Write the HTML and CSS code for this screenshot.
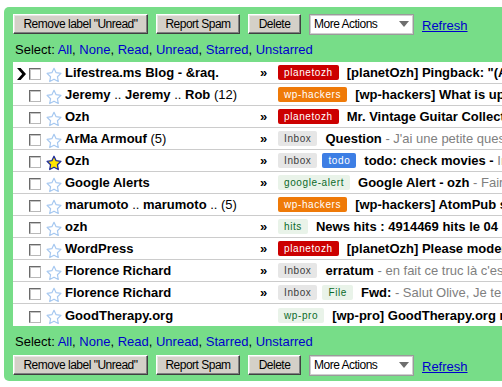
FILE: index.html
```html
<!DOCTYPE html>
<html>
<head>
<meta charset="utf-8">
<title>Inbox</title>
<link rel="stylesheet" href="styles.css">
</head>
<body>
<div class="page">
  <div class="panel">
    <div class="toolbar">
      <button class="btn btn-remove">Remove label "Unread"</button>
      <button class="btn btn-spam">Report Spam</button>
      <button class="btn btn-delete">Delete</button>
      <div class="select"><span>More Actions</span><span class="caret"></span></div>
      <a class="refresh" href="#">Refresh</a>
    </div>
    <div class="selectline">Select: <a href="#">All</a>, <a href="#">None</a>, <a href="#">Read</a>, <a href="#">Unread</a>, <a href="#">Starred</a>, <a href="#">Unstarred</a></div>

    <div class="list">
      <div class="row">
        <span class="c-arrow"><svg class="chev" width="9" height="12" viewBox="0 0 9 12"><polygon points="0,0 3.6,0 9,6 3.6,12 0,12 5.2,6" fill="#000"/></svg></span>
        <span class="c-check"><span class="check"></span></span>
        <span class="c-star"><svg class="star" width="16" height="16" viewBox="0 0 16 16"><polygon points="8,1.3 10.12,5.69 14.94,6.34 11.42,9.71 12.29,14.51 8,12.2 3.71,14.51 4.58,9.71 1.06,6.34 5.88,5.69"/></svg></span>
        <span class="c-from"><b>Lifestrea.ms Blog - &amp;raq.</b></span>
        <span class="c-more">»</span>
        <span class="c-subj"><span class="lbl lbl-red">planetozh</span><span class="subj"><b>[planetOzh] Pingback: "(Ab)using Google Reader"</b></span></span>
      </div>
      <div class="row">
        <span class="c-arrow"></span>
        <span class="c-check"><span class="check"></span></span>
        <span class="c-star"><svg class="star" width="16" height="16" viewBox="0 0 16 16"><polygon points="8,1.3 10.12,5.69 14.94,6.34 11.42,9.71 12.29,14.51 8,12.2 3.71,14.51 4.58,9.71 1.06,6.34 5.88,5.69"/></svg></span>
        <span class="c-from"><b>Jeremy</b> .. <b>Jeremy</b> .. <b>Rob</b> (12)</span>
        <span class="c-more"></span>
        <span class="c-subj"><span class="lbl lbl-orange">wp-hackers</span><span class="subj"><b>[wp-hackers] What is up with the plugins</b></span></span>
      </div>
      <div class="row">
        <span class="c-arrow"></span>
        <span class="c-check"><span class="check"></span></span>
        <span class="c-star"><svg class="star" width="16" height="16" viewBox="0 0 16 16"><polygon points="8,1.3 10.12,5.69 14.94,6.34 11.42,9.71 12.29,14.51 8,12.2 3.71,14.51 4.58,9.71 1.06,6.34 5.88,5.69"/></svg></span>
        <span class="c-from"><b>Ozh</b></span>
        <span class="c-more">»</span>
        <span class="c-subj"><span class="lbl lbl-red">planetozh</span><span class="subj"><b>Mr. Vintage Guitar Collection</b></span></span>
      </div>
      <div class="row">
        <span class="c-arrow"></span>
        <span class="c-check"><span class="check"></span></span>
        <span class="c-star"><svg class="star" width="16" height="16" viewBox="0 0 16 16"><polygon points="8,1.3 10.12,5.69 14.94,6.34 11.42,9.71 12.29,14.51 8,12.2 3.71,14.51 4.58,9.71 1.06,6.34 5.88,5.69"/></svg></span>
        <span class="c-from"><b>ArMa Armouf</b> (5)</span>
        <span class="c-more">»</span>
        <span class="c-subj"><span class="lbl lbl-gray">Inbox</span><span class="subj"><b>Question</b><span class="snip"> - J'ai une petite question pour toi</span></span></span>
      </div>
      <div class="row">
        <span class="c-arrow"></span>
        <span class="c-check"><span class="check"></span></span>
        <span class="c-star"><svg class="star on" width="16" height="16" viewBox="0 0 16 16"><polygon points="8,1.3 10.12,5.69 14.94,6.34 11.42,9.71 12.29,14.51 8,12.2 3.71,14.51 4.58,9.71 1.06,6.34 5.88,5.69"/></svg></span>
        <span class="c-from"><b>Ozh</b></span>
        <span class="c-more">»</span>
        <span class="c-subj"><span class="lbl lbl-gray">Inbox</span><span class="lbl lbl-blue">todo</span><span class="subj"><b>todo: check movies -</b><span class="snip"> Inception</span></span></span>
      </div>
      <div class="row">
        <span class="c-arrow"></span>
        <span class="c-check"><span class="check"></span></span>
        <span class="c-star"><svg class="star" width="16" height="16" viewBox="0 0 16 16"><polygon points="8,1.3 10.12,5.69 14.94,6.34 11.42,9.71 12.29,14.51 8,12.2 3.71,14.51 4.58,9.71 1.06,6.34 5.88,5.69"/></svg></span>
        <span class="c-from"><b>Google Alerts</b></span>
        <span class="c-more">»</span>
        <span class="c-subj"><span class="lbl lbl-green">google-alert</span><span class="subj"><b>Google Alert - ozh</b><span class="snip"> - Fairly new results</span></span></span>
      </div>
      <div class="row">
        <span class="c-arrow"></span>
        <span class="c-check"><span class="check"></span></span>
        <span class="c-star"><svg class="star" width="16" height="16" viewBox="0 0 16 16"><polygon points="8,1.3 10.12,5.69 14.94,6.34 11.42,9.71 12.29,14.51 8,12.2 3.71,14.51 4.58,9.71 1.06,6.34 5.88,5.69"/></svg></span>
        <span class="c-from"><b>marumoto</b> .. <b>marumoto</b> .. (5)</span>
        <span class="c-more"></span>
        <span class="c-subj"><span class="lbl lbl-orange">wp-hackers</span><span class="subj"><b>[wp-hackers] AtomPub support</b></span></span>
      </div>
      <div class="row">
        <span class="c-arrow"></span>
        <span class="c-check"><span class="check"></span></span>
        <span class="c-star"><svg class="star" width="16" height="16" viewBox="0 0 16 16"><polygon points="8,1.3 10.12,5.69 14.94,6.34 11.42,9.71 12.29,14.51 8,12.2 3.71,14.51 4.58,9.71 1.06,6.34 5.88,5.69"/></svg></span>
        <span class="c-from"><b>ozh</b></span>
        <span class="c-more">»</span>
        <span class="c-subj"><span class="lbl lbl-green">hits</span><span class="subj"><b>News hits : 4914469 hits le 04 mars</b></span></span>
      </div>
      <div class="row">
        <span class="c-arrow"></span>
        <span class="c-check"><span class="check"></span></span>
        <span class="c-star"><svg class="star" width="16" height="16" viewBox="0 0 16 16"><polygon points="8,1.3 10.12,5.69 14.94,6.34 11.42,9.71 12.29,14.51 8,12.2 3.71,14.51 4.58,9.71 1.06,6.34 5.88,5.69"/></svg></span>
        <span class="c-from"><b>WordPress</b></span>
        <span class="c-more">»</span>
        <span class="c-subj"><span class="lbl lbl-red">planetozh</span><span class="subj"><b>[planetOzh] Please moderate: comment</b></span></span>
      </div>
      <div class="row">
        <span class="c-arrow"></span>
        <span class="c-check"><span class="check"></span></span>
        <span class="c-star"><svg class="star" width="16" height="16" viewBox="0 0 16 16"><polygon points="8,1.3 10.12,5.69 14.94,6.34 11.42,9.71 12.29,14.51 8,12.2 3.71,14.51 4.58,9.71 1.06,6.34 5.88,5.69"/></svg></span>
        <span class="c-from"><b>Florence Richard</b></span>
        <span class="c-more">»</span>
        <span class="c-subj"><span class="lbl lbl-gray">Inbox</span><span class="subj"><b>erratum</b><span class="snip"> - en fait ce truc là c'est pas ça</span></span></span>
      </div>
      <div class="row">
        <span class="c-arrow"></span>
        <span class="c-check"><span class="check"></span></span>
        <span class="c-star"><svg class="star" width="16" height="16" viewBox="0 0 16 16"><polygon points="8,1.3 10.12,5.69 14.94,6.34 11.42,9.71 12.29,14.51 8,12.2 3.71,14.51 4.58,9.71 1.06,6.34 5.88,5.69"/></svg></span>
        <span class="c-from"><b>Florence Richard</b></span>
        <span class="c-more">»</span>
        <span class="c-subj"><span class="lbl lbl-gray">Inbox</span><span class="lbl lbl-green">File</span><span class="subj"><b>Fwd:</b><span class="snip"> - Salut Olive, Je te transfère</span></span></span>
      </div>
      <div class="row">
        <span class="c-arrow"></span>
        <span class="c-check"><span class="check"></span></span>
        <span class="c-star"><svg class="star" width="16" height="16" viewBox="0 0 16 16"><polygon points="8,1.3 10.12,5.69 14.94,6.34 11.42,9.71 12.29,14.51 8,12.2 3.71,14.51 4.58,9.71 1.06,6.34 5.88,5.69"/></svg></span>
        <span class="c-from"><b>GoodTherapy.org</b></span>
        <span class="c-more"></span>
        <span class="c-subj"><span class="lbl lbl-green">wp-pro</span><span class="subj"><b>[wp-pro] GoodTherapy.org needs help</b></span></span>
      </div>
    </div>

    <div class="selectline bottom">Select: <a href="#">All</a>, <a href="#">None</a>, <a href="#">Read</a>, <a href="#">Unread</a>, <a href="#">Starred</a>, <a href="#">Unstarred</a></div>
    <div class="toolbar">
      <button class="btn btn-remove">Remove label "Unread"</button>
      <button class="btn btn-spam">Report Spam</button>
      <button class="btn btn-delete">Delete</button>
      <div class="select"><span>More Actions</span><span class="caret"></span></div>
      <a class="refresh" href="#">Refresh</a>
    </div>
  </div>
</div>
</body>
</html>
```

FILE: styles.css
```css
html, body {
  margin: 0;
  padding: 0;
  background: #fff;
  overflow: hidden;
}

body {
  font-family: "Liberation Sans", Arial, sans-serif;
  font-size: 13px;
  color: #000;
}

.page {
  width: 780px;
  padding: 7px 0 0 4px;
}

.panel {
  background: #77dd88;
  border-radius: 5px 0 0 5px;
  padding: 7px 0 6px 9px;
}

.toolbar {
  display: flex;
  align-items: center;
  height: 20px;
}

.btn {
  -webkit-appearance: none;
  appearance: none;
  box-sizing: border-box;
  height: 20px;
  margin: 0 8px 0 0;
  padding: 0;
  font-family: "Liberation Sans", Arial, sans-serif;
  font-size: 12px;
  letter-spacing: -0.5px;
  line-height: 18px;
  color: #000;
  background: #d4d0c8;
  border: 1px solid;
  border-color: #ffffff #404040 #404040 #ffffff;
  box-shadow: inset -1px -1px 0 #808080, inset 1px 1px 0 #e8e6e2;
  text-align: center;
}

.btn-remove { width: 135px; }
.btn-spam { width: 84px; }
.btn-delete { width: 53px; }

.select {
  box-sizing: border-box;
  width: 105px;
  height: 21px;
  margin-right: 8px;
  padding: 0 4px 0 4px;
  display: flex;
  align-items: center;
  justify-content: space-between;
  background: #fff;
  border: 1px solid #9a9a9a;
  box-shadow: inset 0 0 0 1px #cfcfcf;
  font-size: 12px;
  letter-spacing: -0.5px;
}

.caret {
  width: 0;
  height: 0;
  border-left: 5px solid transparent;
  border-right: 5px solid transparent;
  border-top: 6px solid #6e6e6e;
}

.refresh {
  color: #0000cc;
  text-decoration: underline;
  font-size: 13px;
  margin-top: 2px;
}

.selectline {
  margin: 8px 0 5px 0;
  padding-left: 2px;
  line-height: 15px;
  height: 15px;
  white-space: nowrap;
}

.selectline.bottom {
  margin: 8px 0 6px 0;
}

.selectline a {
  color: #0000cc;
  text-decoration: none;
}

.list {
  background: #fff;
}

.row {
  display: flex;
  align-items: center;
  height: 21px;
  border-bottom: 1px solid #cccccc;
  white-space: nowrap;
  overflow: hidden;
  line-height: 21px;
}

.row:last-child {
  height: 22px;
  border-bottom: none;
}

.c-arrow {
  width: 16px;
  flex: none;
  display: flex;
  padding-left: 0;
}

.chev {
  display: block;
  margin: 2px 0 0 4px;
}

.c-check {
  width: 17px;
  flex: none;
  display: flex;
}

.check {
  display: block;
  box-sizing: border-box;
  width: 12px;
  height: 12px;
  margin-top: 3px;
  background: #fff;
  border: 1px solid;
  border-color: #6a6a6a #b8b8b8 #b8b8b8 #6a6a6a;
  box-shadow: inset 1px 1px 0 #c4c4c4;
}

.c-star {
  width: 19px;
  flex: none;
  display: flex;
}

.star {
  display: block;
  margin-top: 4px;
  fill: #ffffff;
  stroke: #a6c8f0;
  stroke-width: 1.2;
  stroke-linejoin: round;
}

.star.on {
  fill: #ffe600;
  stroke: #1c2a9c;
  stroke-width: 1.3;
}

.c-from {
  width: 195px;
  flex: none;
  overflow: hidden;
}

.c-more {
  width: 18px;
  flex: none;
  font-weight: bold;
}

.c-subj {
  display: flex;
  align-items: center;
  flex: none;
}

.lbl {
  display: inline-block;
  height: 15px;
  line-height: 15px;
  padding: 0 6px;
  margin-right: 5px;
  border-radius: 2px;
  font-size: 10px;
  letter-spacing: 0.6px;
}

.lbl-red { background: #cc0000; color: #fff; }
.lbl-orange { background: #ef7a08; color: #fff; }
.lbl-gray { background: #e6e6e6; color: #3c3c3c; }
.lbl-blue { background: #3d7ee4; color: #fff; }
.lbl-green { background: #e9f3e9; color: #0b6a2a; }

.subj {
  margin-left: 3px;
}

.snip {
  color: #808080;
}
```
